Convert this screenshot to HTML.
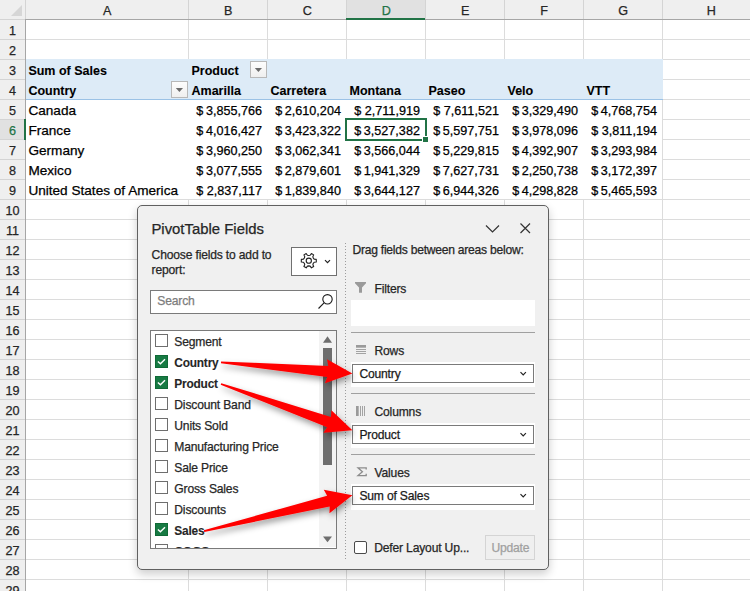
<!DOCTYPE html>
<html><head><meta charset="utf-8"><style>
html,body{margin:0;padding:0;}
body{width:750px;height:591px;overflow:hidden;position:relative;background:#fff;font-family:"Liberation Sans", sans-serif;}
.t{position:absolute;white-space:nowrap;line-height:20px;height:20px;-webkit-text-stroke:0.25px currentColor;}
</style></head><body>
<div style="position:absolute;left:0px;top:0px;width:750px;height:19px;background:#efefef"></div>
<div style="position:absolute;left:0px;top:0px;width:25px;height:591px;background:#efefef"></div>
<div style="position:absolute;left:346px;top:0px;width:79px;height:19px;background:#e1e1e1"></div>
<div style="position:absolute;left:0px;top:120px;width:25px;height:19px;background:#e1e1e1"></div>
<div style="position:absolute;left:26px;top:39px;width:724px;height:1px;background:#dcdcdc"></div>
<div style="position:absolute;left:0px;top:39px;width:25px;height:1px;background:#d4d4d4"></div>
<div style="position:absolute;left:26px;top:59px;width:724px;height:1px;background:#dcdcdc"></div>
<div style="position:absolute;left:0px;top:59px;width:25px;height:1px;background:#d4d4d4"></div>
<div style="position:absolute;left:26px;top:79px;width:724px;height:1px;background:#dcdcdc"></div>
<div style="position:absolute;left:0px;top:79px;width:25px;height:1px;background:#d4d4d4"></div>
<div style="position:absolute;left:26px;top:99px;width:724px;height:1px;background:#dcdcdc"></div>
<div style="position:absolute;left:0px;top:99px;width:25px;height:1px;background:#d4d4d4"></div>
<div style="position:absolute;left:26px;top:119px;width:724px;height:1px;background:#dcdcdc"></div>
<div style="position:absolute;left:0px;top:119px;width:25px;height:1px;background:#d4d4d4"></div>
<div style="position:absolute;left:26px;top:139px;width:724px;height:1px;background:#dcdcdc"></div>
<div style="position:absolute;left:0px;top:139px;width:25px;height:1px;background:#d4d4d4"></div>
<div style="position:absolute;left:26px;top:159px;width:724px;height:1px;background:#dcdcdc"></div>
<div style="position:absolute;left:0px;top:159px;width:25px;height:1px;background:#d4d4d4"></div>
<div style="position:absolute;left:26px;top:179px;width:724px;height:1px;background:#dcdcdc"></div>
<div style="position:absolute;left:0px;top:179px;width:25px;height:1px;background:#d4d4d4"></div>
<div style="position:absolute;left:26px;top:199px;width:724px;height:1px;background:#dcdcdc"></div>
<div style="position:absolute;left:0px;top:199px;width:25px;height:1px;background:#d4d4d4"></div>
<div style="position:absolute;left:26px;top:219px;width:724px;height:1px;background:#dcdcdc"></div>
<div style="position:absolute;left:0px;top:219px;width:25px;height:1px;background:#d4d4d4"></div>
<div style="position:absolute;left:26px;top:239px;width:724px;height:1px;background:#dcdcdc"></div>
<div style="position:absolute;left:0px;top:239px;width:25px;height:1px;background:#d4d4d4"></div>
<div style="position:absolute;left:26px;top:259px;width:724px;height:1px;background:#dcdcdc"></div>
<div style="position:absolute;left:0px;top:259px;width:25px;height:1px;background:#d4d4d4"></div>
<div style="position:absolute;left:26px;top:279px;width:724px;height:1px;background:#dcdcdc"></div>
<div style="position:absolute;left:0px;top:279px;width:25px;height:1px;background:#d4d4d4"></div>
<div style="position:absolute;left:26px;top:299px;width:724px;height:1px;background:#dcdcdc"></div>
<div style="position:absolute;left:0px;top:299px;width:25px;height:1px;background:#d4d4d4"></div>
<div style="position:absolute;left:26px;top:319px;width:724px;height:1px;background:#dcdcdc"></div>
<div style="position:absolute;left:0px;top:319px;width:25px;height:1px;background:#d4d4d4"></div>
<div style="position:absolute;left:26px;top:339px;width:724px;height:1px;background:#dcdcdc"></div>
<div style="position:absolute;left:0px;top:339px;width:25px;height:1px;background:#d4d4d4"></div>
<div style="position:absolute;left:26px;top:359px;width:724px;height:1px;background:#dcdcdc"></div>
<div style="position:absolute;left:0px;top:359px;width:25px;height:1px;background:#d4d4d4"></div>
<div style="position:absolute;left:26px;top:379px;width:724px;height:1px;background:#dcdcdc"></div>
<div style="position:absolute;left:0px;top:379px;width:25px;height:1px;background:#d4d4d4"></div>
<div style="position:absolute;left:26px;top:399px;width:724px;height:1px;background:#dcdcdc"></div>
<div style="position:absolute;left:0px;top:399px;width:25px;height:1px;background:#d4d4d4"></div>
<div style="position:absolute;left:26px;top:419px;width:724px;height:1px;background:#dcdcdc"></div>
<div style="position:absolute;left:0px;top:419px;width:25px;height:1px;background:#d4d4d4"></div>
<div style="position:absolute;left:26px;top:439px;width:724px;height:1px;background:#dcdcdc"></div>
<div style="position:absolute;left:0px;top:439px;width:25px;height:1px;background:#d4d4d4"></div>
<div style="position:absolute;left:26px;top:459px;width:724px;height:1px;background:#dcdcdc"></div>
<div style="position:absolute;left:0px;top:459px;width:25px;height:1px;background:#d4d4d4"></div>
<div style="position:absolute;left:26px;top:479px;width:724px;height:1px;background:#dcdcdc"></div>
<div style="position:absolute;left:0px;top:479px;width:25px;height:1px;background:#d4d4d4"></div>
<div style="position:absolute;left:26px;top:499px;width:724px;height:1px;background:#dcdcdc"></div>
<div style="position:absolute;left:0px;top:499px;width:25px;height:1px;background:#d4d4d4"></div>
<div style="position:absolute;left:26px;top:519px;width:724px;height:1px;background:#dcdcdc"></div>
<div style="position:absolute;left:0px;top:519px;width:25px;height:1px;background:#d4d4d4"></div>
<div style="position:absolute;left:26px;top:539px;width:724px;height:1px;background:#dcdcdc"></div>
<div style="position:absolute;left:0px;top:539px;width:25px;height:1px;background:#d4d4d4"></div>
<div style="position:absolute;left:26px;top:559px;width:724px;height:1px;background:#dcdcdc"></div>
<div style="position:absolute;left:0px;top:559px;width:25px;height:1px;background:#d4d4d4"></div>
<div style="position:absolute;left:26px;top:579px;width:724px;height:1px;background:#dcdcdc"></div>
<div style="position:absolute;left:0px;top:579px;width:25px;height:1px;background:#d4d4d4"></div>
<div style="position:absolute;left:26px;top:599px;width:724px;height:1px;background:#dcdcdc"></div>
<div style="position:absolute;left:0px;top:599px;width:25px;height:1px;background:#d4d4d4"></div>
<div style="position:absolute;left:188px;top:20px;width:1px;height:571px;background:#dcdcdc"></div>
<div style="position:absolute;left:188px;top:0px;width:1px;height:19px;background:#d4d4d4"></div>
<div style="position:absolute;left:267px;top:20px;width:1px;height:571px;background:#dcdcdc"></div>
<div style="position:absolute;left:267px;top:0px;width:1px;height:19px;background:#d4d4d4"></div>
<div style="position:absolute;left:346px;top:20px;width:1px;height:571px;background:#dcdcdc"></div>
<div style="position:absolute;left:346px;top:0px;width:1px;height:19px;background:#d4d4d4"></div>
<div style="position:absolute;left:425px;top:20px;width:1px;height:571px;background:#dcdcdc"></div>
<div style="position:absolute;left:425px;top:0px;width:1px;height:19px;background:#d4d4d4"></div>
<div style="position:absolute;left:504px;top:20px;width:1px;height:571px;background:#dcdcdc"></div>
<div style="position:absolute;left:504px;top:0px;width:1px;height:19px;background:#d4d4d4"></div>
<div style="position:absolute;left:583px;top:20px;width:1px;height:571px;background:#dcdcdc"></div>
<div style="position:absolute;left:583px;top:0px;width:1px;height:19px;background:#d4d4d4"></div>
<div style="position:absolute;left:662px;top:20px;width:1px;height:571px;background:#dcdcdc"></div>
<div style="position:absolute;left:662px;top:0px;width:1px;height:19px;background:#d4d4d4"></div>
<div style="position:absolute;left:791px;top:20px;width:1px;height:571px;background:#dcdcdc"></div>
<div style="position:absolute;left:791px;top:0px;width:1px;height:19px;background:#d4d4d4"></div>
<div style="position:absolute;left:26px;top:59px;width:636px;height:140px;background:#fff"></div>
<div style="position:absolute;left:26px;top:59px;width:637px;height:40px;background:#ddebf7"></div>
<div style="position:absolute;left:26px;top:99px;width:637px;height:1px;background:#9bc2e6"></div>
<div style="position:absolute;left:0px;top:19px;width:25px;height:1px;background:#d4d4d4"></div>
<div style="position:absolute;left:25px;top:0px;width:1px;height:19px;background:#d4d4d4"></div>
<div style="position:absolute;left:25px;top:19px;width:725px;height:1px;background:#a6a6a6"></div>
<div style="position:absolute;left:25px;top:19px;width:1px;height:572px;background:#a6a6a6"></div>
<div style="position:absolute;left:346px;top:18px;width:79px;height:2px;background:#217346"></div>
<div style="position:absolute;left:24px;top:119px;width:2px;height:21px;background:#217346"></div>
<svg style="position:absolute;left:0;top:0" width="25" height="19"><polygon points="22,5 22,16 11,16" fill="#d6d6d6"/></svg>
<div class="t" style="left:-42.80px;width:300px;text-align:center;top:1.03px;font-size:12.6px;color:#262626;">A</div>
<div class="t" style="left:78.20px;width:300px;text-align:center;top:1.03px;font-size:12.6px;color:#262626;">B</div>
<div class="t" style="left:157.20px;width:300px;text-align:center;top:1.03px;font-size:12.6px;color:#262626;">C</div>
<div class="t" style="left:236.20px;width:300px;text-align:center;top:1.03px;font-size:12.6px;color:#217346;">D</div>
<div class="t" style="left:315.20px;width:300px;text-align:center;top:1.03px;font-size:12.6px;color:#262626;">E</div>
<div class="t" style="left:394.20px;width:300px;text-align:center;top:1.03px;font-size:12.6px;color:#262626;">F</div>
<div class="t" style="left:473.20px;width:300px;text-align:center;top:1.03px;font-size:12.6px;color:#262626;">G</div>
<div class="t" style="left:561.20px;width:300px;text-align:center;top:1.03px;font-size:12.6px;color:#262626;">H</div>
<div class="t" style="left:-137.50px;width:300px;text-align:center;top:21.03px;font-size:12.6px;color:#262626;">1</div>
<div class="t" style="left:-137.50px;width:300px;text-align:center;top:41.03px;font-size:12.6px;color:#262626;">2</div>
<div class="t" style="left:-137.50px;width:300px;text-align:center;top:61.03px;font-size:12.6px;color:#262626;">3</div>
<div class="t" style="left:-137.50px;width:300px;text-align:center;top:81.03px;font-size:12.6px;color:#262626;">4</div>
<div class="t" style="left:-137.50px;width:300px;text-align:center;top:101.03px;font-size:12.6px;color:#262626;">5</div>
<div class="t" style="left:-137.50px;width:300px;text-align:center;top:121.03px;font-size:12.6px;color:#217346;">6</div>
<div class="t" style="left:-137.50px;width:300px;text-align:center;top:141.03px;font-size:12.6px;color:#262626;">7</div>
<div class="t" style="left:-137.50px;width:300px;text-align:center;top:161.03px;font-size:12.6px;color:#262626;">8</div>
<div class="t" style="left:-137.50px;width:300px;text-align:center;top:181.03px;font-size:12.6px;color:#262626;">9</div>
<div class="t" style="left:-137.50px;width:300px;text-align:center;top:201.03px;font-size:12.6px;color:#262626;">10</div>
<div class="t" style="left:-137.50px;width:300px;text-align:center;top:221.03px;font-size:12.6px;color:#262626;">11</div>
<div class="t" style="left:-137.50px;width:300px;text-align:center;top:241.03px;font-size:12.6px;color:#262626;">12</div>
<div class="t" style="left:-137.50px;width:300px;text-align:center;top:261.03px;font-size:12.6px;color:#262626;">13</div>
<div class="t" style="left:-137.50px;width:300px;text-align:center;top:281.03px;font-size:12.6px;color:#262626;">14</div>
<div class="t" style="left:-137.50px;width:300px;text-align:center;top:301.03px;font-size:12.6px;color:#262626;">15</div>
<div class="t" style="left:-137.50px;width:300px;text-align:center;top:321.03px;font-size:12.6px;color:#262626;">16</div>
<div class="t" style="left:-137.50px;width:300px;text-align:center;top:341.03px;font-size:12.6px;color:#262626;">17</div>
<div class="t" style="left:-137.50px;width:300px;text-align:center;top:361.03px;font-size:12.6px;color:#262626;">18</div>
<div class="t" style="left:-137.50px;width:300px;text-align:center;top:381.03px;font-size:12.6px;color:#262626;">19</div>
<div class="t" style="left:-137.50px;width:300px;text-align:center;top:401.03px;font-size:12.6px;color:#262626;">20</div>
<div class="t" style="left:-137.50px;width:300px;text-align:center;top:421.03px;font-size:12.6px;color:#262626;">21</div>
<div class="t" style="left:-137.50px;width:300px;text-align:center;top:441.03px;font-size:12.6px;color:#262626;">22</div>
<div class="t" style="left:-137.50px;width:300px;text-align:center;top:461.03px;font-size:12.6px;color:#262626;">23</div>
<div class="t" style="left:-137.50px;width:300px;text-align:center;top:481.03px;font-size:12.6px;color:#262626;">24</div>
<div class="t" style="left:-137.50px;width:300px;text-align:center;top:501.03px;font-size:12.6px;color:#262626;">25</div>
<div class="t" style="left:-137.50px;width:300px;text-align:center;top:521.03px;font-size:12.6px;color:#262626;">26</div>
<div class="t" style="left:-137.50px;width:300px;text-align:center;top:541.03px;font-size:12.6px;color:#262626;">27</div>
<div class="t" style="left:-137.50px;width:300px;text-align:center;top:561.03px;font-size:12.6px;color:#262626;">28</div>
<div class="t" style="left:-137.50px;width:300px;text-align:center;top:581.03px;font-size:12.6px;color:#262626;">29</div>
<div class="t" style="left:28.40px;top:61.17px;font-size:12.5px;font-weight:bold;-webkit-text-stroke:0.1px currentColor;color:#000;">Sum of Sales</div>
<div class="t" style="left:191.50px;top:61.17px;font-size:12.5px;font-weight:bold;-webkit-text-stroke:0.1px currentColor;color:#000;">Product</div>
<div class="t" style="left:28.40px;top:81.17px;font-size:12.5px;font-weight:bold;-webkit-text-stroke:0.1px currentColor;color:#000;">Country</div>
<div class="t" style="left:191.50px;top:81.17px;font-size:12.5px;font-weight:bold;-webkit-text-stroke:0.1px currentColor;color:#000;">Amarilla</div>
<div class="t" style="left:270.50px;top:81.17px;font-size:12.5px;font-weight:bold;-webkit-text-stroke:0.1px currentColor;color:#000;">Carretera</div>
<div class="t" style="left:349.50px;top:81.17px;font-size:12.5px;font-weight:bold;-webkit-text-stroke:0.1px currentColor;color:#000;">Montana</div>
<div class="t" style="left:428.50px;top:81.17px;font-size:12.5px;font-weight:bold;-webkit-text-stroke:0.1px currentColor;color:#000;">Paseo</div>
<div class="t" style="left:507.50px;top:81.17px;font-size:12.5px;font-weight:bold;-webkit-text-stroke:0.1px currentColor;color:#000;">Velo</div>
<div class="t" style="left:586.50px;top:81.17px;font-size:12.5px;font-weight:bold;-webkit-text-stroke:0.1px currentColor;color:#000;">VTT</div>
<div style="position:absolute;left:250px;top:61px;width:17px;height:17px;box-sizing:border-box;border:1px solid #b8b8b8;background:linear-gradient(#fdfdfd,#efefef)"></div>
<svg style="position:absolute;left:250px;top:61px" width="17" height="17"><polygon points="4.8,7 12,7 8.4,11" fill="#6b6b6b"/></svg>
<div style="position:absolute;left:171px;top:81px;width:17px;height:17px;box-sizing:border-box;border:1px solid #b8b8b8;background:linear-gradient(#fdfdfd,#efefef)"></div>
<svg style="position:absolute;left:171px;top:81px" width="17" height="17"><polygon points="4.8,7 12,7 8.4,11" fill="#6b6b6b"/></svg>
<div class="t" style="left:28.40px;top:100.79px;font-size:13.6px;color:#000;">Canada</div>
<div class="t" style="left:196.30px;top:101.13px;font-size:12.6px;color:#000;">$</div>
<div class="t" style="left:-38.10px;width:300px;text-align:right;top:101.13px;font-size:12.6px;color:#000;">3,855,766</div>
<div class="t" style="left:275.30px;top:101.13px;font-size:12.6px;color:#000;">$</div>
<div class="t" style="left:40.90px;width:300px;text-align:right;top:101.13px;font-size:12.6px;color:#000;">2,610,204</div>
<div class="t" style="left:354.30px;top:101.13px;font-size:12.6px;color:#000;">$</div>
<div class="t" style="left:119.90px;width:300px;text-align:right;top:101.13px;font-size:12.6px;color:#000;">2,711,919</div>
<div class="t" style="left:433.30px;top:101.13px;font-size:12.6px;color:#000;">$</div>
<div class="t" style="left:198.90px;width:300px;text-align:right;top:101.13px;font-size:12.6px;color:#000;">7,611,521</div>
<div class="t" style="left:512.30px;top:101.13px;font-size:12.6px;color:#000;">$</div>
<div class="t" style="left:277.90px;width:300px;text-align:right;top:101.13px;font-size:12.6px;color:#000;">3,329,490</div>
<div class="t" style="left:591.30px;top:101.13px;font-size:12.6px;color:#000;">$</div>
<div class="t" style="left:356.90px;width:300px;text-align:right;top:101.13px;font-size:12.6px;color:#000;">4,768,754</div>
<div class="t" style="left:28.40px;top:120.79px;font-size:13.6px;color:#000;">France</div>
<div class="t" style="left:196.30px;top:121.13px;font-size:12.6px;color:#000;">$</div>
<div class="t" style="left:-38.10px;width:300px;text-align:right;top:121.13px;font-size:12.6px;color:#000;">4,016,427</div>
<div class="t" style="left:275.30px;top:121.13px;font-size:12.6px;color:#000;">$</div>
<div class="t" style="left:40.90px;width:300px;text-align:right;top:121.13px;font-size:12.6px;color:#000;">3,423,322</div>
<div class="t" style="left:354.30px;top:121.13px;font-size:12.6px;color:#000;">$</div>
<div class="t" style="left:119.90px;width:300px;text-align:right;top:121.13px;font-size:12.6px;color:#000;">3,527,382</div>
<div class="t" style="left:433.30px;top:121.13px;font-size:12.6px;color:#000;">$</div>
<div class="t" style="left:198.90px;width:300px;text-align:right;top:121.13px;font-size:12.6px;color:#000;">5,597,751</div>
<div class="t" style="left:512.30px;top:121.13px;font-size:12.6px;color:#000;">$</div>
<div class="t" style="left:277.90px;width:300px;text-align:right;top:121.13px;font-size:12.6px;color:#000;">3,978,096</div>
<div class="t" style="left:591.30px;top:121.13px;font-size:12.6px;color:#000;">$</div>
<div class="t" style="left:356.90px;width:300px;text-align:right;top:121.13px;font-size:12.6px;color:#000;">3,811,194</div>
<div class="t" style="left:28.40px;top:140.79px;font-size:13.6px;color:#000;">Germany</div>
<div class="t" style="left:196.30px;top:141.13px;font-size:12.6px;color:#000;">$</div>
<div class="t" style="left:-38.10px;width:300px;text-align:right;top:141.13px;font-size:12.6px;color:#000;">3,960,250</div>
<div class="t" style="left:275.30px;top:141.13px;font-size:12.6px;color:#000;">$</div>
<div class="t" style="left:40.90px;width:300px;text-align:right;top:141.13px;font-size:12.6px;color:#000;">3,062,341</div>
<div class="t" style="left:354.30px;top:141.13px;font-size:12.6px;color:#000;">$</div>
<div class="t" style="left:119.90px;width:300px;text-align:right;top:141.13px;font-size:12.6px;color:#000;">3,566,044</div>
<div class="t" style="left:433.30px;top:141.13px;font-size:12.6px;color:#000;">$</div>
<div class="t" style="left:198.90px;width:300px;text-align:right;top:141.13px;font-size:12.6px;color:#000;">5,229,815</div>
<div class="t" style="left:512.30px;top:141.13px;font-size:12.6px;color:#000;">$</div>
<div class="t" style="left:277.90px;width:300px;text-align:right;top:141.13px;font-size:12.6px;color:#000;">4,392,907</div>
<div class="t" style="left:591.30px;top:141.13px;font-size:12.6px;color:#000;">$</div>
<div class="t" style="left:356.90px;width:300px;text-align:right;top:141.13px;font-size:12.6px;color:#000;">3,293,984</div>
<div class="t" style="left:28.40px;top:160.79px;font-size:13.6px;color:#000;">Mexico</div>
<div class="t" style="left:196.30px;top:161.13px;font-size:12.6px;color:#000;">$</div>
<div class="t" style="left:-38.10px;width:300px;text-align:right;top:161.13px;font-size:12.6px;color:#000;">3,077,555</div>
<div class="t" style="left:275.30px;top:161.13px;font-size:12.6px;color:#000;">$</div>
<div class="t" style="left:40.90px;width:300px;text-align:right;top:161.13px;font-size:12.6px;color:#000;">2,879,601</div>
<div class="t" style="left:354.30px;top:161.13px;font-size:12.6px;color:#000;">$</div>
<div class="t" style="left:119.90px;width:300px;text-align:right;top:161.13px;font-size:12.6px;color:#000;">1,941,329</div>
<div class="t" style="left:433.30px;top:161.13px;font-size:12.6px;color:#000;">$</div>
<div class="t" style="left:198.90px;width:300px;text-align:right;top:161.13px;font-size:12.6px;color:#000;">7,627,731</div>
<div class="t" style="left:512.30px;top:161.13px;font-size:12.6px;color:#000;">$</div>
<div class="t" style="left:277.90px;width:300px;text-align:right;top:161.13px;font-size:12.6px;color:#000;">2,250,738</div>
<div class="t" style="left:591.30px;top:161.13px;font-size:12.6px;color:#000;">$</div>
<div class="t" style="left:356.90px;width:300px;text-align:right;top:161.13px;font-size:12.6px;color:#000;">3,172,397</div>
<div class="t" style="left:28.40px;top:180.79px;font-size:13.6px;color:#000;">United States of America</div>
<div class="t" style="left:196.30px;top:181.13px;font-size:12.6px;color:#000;">$</div>
<div class="t" style="left:-38.10px;width:300px;text-align:right;top:181.13px;font-size:12.6px;color:#000;">2,837,117</div>
<div class="t" style="left:275.30px;top:181.13px;font-size:12.6px;color:#000;">$</div>
<div class="t" style="left:40.90px;width:300px;text-align:right;top:181.13px;font-size:12.6px;color:#000;">1,839,840</div>
<div class="t" style="left:354.30px;top:181.13px;font-size:12.6px;color:#000;">$</div>
<div class="t" style="left:119.90px;width:300px;text-align:right;top:181.13px;font-size:12.6px;color:#000;">3,644,127</div>
<div class="t" style="left:433.30px;top:181.13px;font-size:12.6px;color:#000;">$</div>
<div class="t" style="left:198.90px;width:300px;text-align:right;top:181.13px;font-size:12.6px;color:#000;">6,944,326</div>
<div class="t" style="left:512.30px;top:181.13px;font-size:12.6px;color:#000;">$</div>
<div class="t" style="left:277.90px;width:300px;text-align:right;top:181.13px;font-size:12.6px;color:#000;">4,298,828</div>
<div class="t" style="left:591.30px;top:181.13px;font-size:12.6px;color:#000;">$</div>
<div class="t" style="left:356.90px;width:300px;text-align:right;top:181.13px;font-size:12.6px;color:#000;">5,465,593</div>
<div style="position:absolute;left:345px;top:118px;width:82px;height:23px;box-sizing:border-box;border:2px solid #217346"></div>
<div style="position:absolute;left:423px;top:137px;width:5px;height:5px;background:#217346;outline:1px solid #fff"></div>
<div style="position:absolute;left:137px;top:205px;width:412px;height:365px;box-sizing:border-box;border:1px solid #606060;border-radius:5px;background:#f0f0f0;box-shadow:0 4px 10px rgba(0,0,0,0.2)"></div>
<div class="t" style="left:151.40px;top:219.04px;font-size:14.9px;color:#262626;">PivotTable Fields</div>
<svg style="position:absolute;left:480px;top:218px" width="60" height="20"><polyline points="6,7.5 12.5,14 19,7.5" fill="none" stroke="#333" stroke-width="1.2"/><path d="M40.5,5.5 L50,15 M50,5.5 L40.5,15" stroke="#333" stroke-width="1.2"/></svg>
<div class="t" style="left:151.60px;top:244.81px;font-size:12.1px;color:#262626;letter-spacing:-0.17px;">Choose fields to add to</div>
<div class="t" style="left:151.60px;top:260.31px;font-size:12.1px;color:#262626;letter-spacing:-0.17px;">report:</div>
<div style="position:absolute;left:291px;top:247px;width:46px;height:29px;box-sizing:border-box;border:1px solid #707070;background:#fff"></div>
<svg style="position:absolute;left:291px;top:247px" width="46" height="29"><polygon points="22.30,11.10 23.18,12.16 25.28,12.38 25.28,15.02 23.18,15.24 22.30,16.30 21.83,17.59 22.69,19.52 20.40,20.84 19.15,19.13 17.80,18.90 16.45,19.13 15.20,20.84 12.91,19.52 13.77,17.59 13.30,16.30 12.42,15.24 10.32,15.02 10.32,12.38 12.42,12.16 13.30,11.10 13.77,9.81 12.91,7.88 15.20,6.56 16.45,8.27 17.80,8.50 19.15,8.27 20.40,6.56 22.69,7.88 21.83,9.81" fill="none" stroke="#222" stroke-width="1.1" stroke-linejoin="round"/><circle cx="17.80000000000001" cy="13.699999999999989" r="2.6" fill="none" stroke="#222" stroke-width="1.1"/><polyline points="34,13.2 36.5,15.7 39,13.2" fill="none" stroke="#222" stroke-width="1.2"/></svg>
<div style="position:absolute;left:150px;top:290px;width:187px;height:24px;box-sizing:border-box;border:1px solid #7a7a7a;background:#fff"></div>
<div class="t" style="left:157.30px;top:291.31px;font-size:12.1px;color:#7c7c7c;letter-spacing:-0.17px;">Search</div>
<svg style="position:absolute;left:306px;top:286px" width="36" height="32"><circle cx="21.5" cy="13.3" r="4.7" fill="none" stroke="#1a1a1a" stroke-width="1.1"/><line x1="18" y1="16.8" x2="12.5" y2="22.5" stroke="#1a1a1a" stroke-width="1.1"/></svg>
<div style="position:absolute;left:150px;top:330px;width:187px;height:219px;box-sizing:border-box;border:1px solid #7a7a7a;background:#fff;overflow:hidden">
<div style="position:absolute;left:168px;top:0;width:18px;height:216px;background:#f3f3f3"></div>
<svg style="position:absolute;left:168px;top:0" width="18" height="216"><polygon points="4,11.8 8.5,5.2 13,11.8" fill="#6e6e6e"/><rect x="4" y="17" width="9" height="117" fill="#6e6e6e"/><polygon points="4,205.5 13,205.5 8.5,211.3" fill="#6e6e6e"/></svg>
</div>
<div style="position:absolute;left:155px;top:334px;width:13px;height:13px;box-sizing:border-box;border:1px solid #6e6e6e;background:#fff"></div>
<div class="t" style="left:174.30px;top:332.01px;font-size:12.1px;color:#262626;letter-spacing:-0.17px;">Segment</div>
<div style="position:absolute;left:155px;top:355px;width:13px;height:13px;box-sizing:border-box;border:1px solid #0f6a36;background:#177a43"></div>
<svg style="position:absolute;left:155px;top:355px" width="13" height="13"><polyline points="2.9,6.5 5.4,8.7 10,4.3" fill="none" stroke="#fff" stroke-width="1.45"/></svg>
<div class="t" style="left:174.30px;top:353.08px;font-size:11.9px;font-weight:bold;-webkit-text-stroke:0.1px currentColor;color:#262626;letter-spacing:-0.2px;">Country</div>
<div style="position:absolute;left:155px;top:376px;width:13px;height:13px;box-sizing:border-box;border:1px solid #0f6a36;background:#177a43"></div>
<svg style="position:absolute;left:155px;top:376px" width="13" height="13"><polyline points="2.9,6.5 5.4,8.7 10,4.3" fill="none" stroke="#fff" stroke-width="1.45"/></svg>
<div class="t" style="left:174.30px;top:374.08px;font-size:11.9px;font-weight:bold;-webkit-text-stroke:0.1px currentColor;color:#262626;letter-spacing:-0.2px;">Product</div>
<div style="position:absolute;left:155px;top:397px;width:13px;height:13px;box-sizing:border-box;border:1px solid #6e6e6e;background:#fff"></div>
<div class="t" style="left:174.30px;top:395.01px;font-size:12.1px;color:#262626;letter-spacing:-0.17px;">Discount Band</div>
<div style="position:absolute;left:155px;top:418px;width:13px;height:13px;box-sizing:border-box;border:1px solid #6e6e6e;background:#fff"></div>
<div class="t" style="left:174.30px;top:416.01px;font-size:12.1px;color:#262626;letter-spacing:-0.17px;">Units Sold</div>
<div style="position:absolute;left:155px;top:439px;width:13px;height:13px;box-sizing:border-box;border:1px solid #6e6e6e;background:#fff"></div>
<div class="t" style="left:174.30px;top:437.01px;font-size:12.1px;color:#262626;letter-spacing:-0.17px;">Manufacturing Price</div>
<div style="position:absolute;left:155px;top:460px;width:13px;height:13px;box-sizing:border-box;border:1px solid #6e6e6e;background:#fff"></div>
<div class="t" style="left:174.30px;top:458.01px;font-size:12.1px;color:#262626;letter-spacing:-0.17px;">Sale Price</div>
<div style="position:absolute;left:155px;top:481px;width:13px;height:13px;box-sizing:border-box;border:1px solid #6e6e6e;background:#fff"></div>
<div class="t" style="left:174.30px;top:479.01px;font-size:12.1px;color:#262626;letter-spacing:-0.17px;">Gross Sales</div>
<div style="position:absolute;left:155px;top:502px;width:13px;height:13px;box-sizing:border-box;border:1px solid #6e6e6e;background:#fff"></div>
<div class="t" style="left:174.30px;top:500.01px;font-size:12.1px;color:#262626;letter-spacing:-0.17px;">Discounts</div>
<div style="position:absolute;left:155px;top:523px;width:13px;height:13px;box-sizing:border-box;border:1px solid #0f6a36;background:#177a43"></div>
<svg style="position:absolute;left:155px;top:523px" width="13" height="13"><polyline points="2.9,6.5 5.4,8.7 10,4.3" fill="none" stroke="#fff" stroke-width="1.45"/></svg>
<div class="t" style="left:174.30px;top:521.08px;font-size:11.9px;font-weight:bold;-webkit-text-stroke:0.1px currentColor;color:#262626;letter-spacing:-0.2px;">Sales</div>
<div style="position:absolute;left:155px;top:544px;width:13px;height:4px;box-sizing:border-box;border:1px solid #6e6e6e;border-bottom:none;background:#fff"></div>
<div class="t" style="left:174.30px;top:542.01px;font-size:12.1px;color:#262626;letter-spacing:-0.17px;">COGS</div>
<div style="position:absolute;left:151px;top:549px;width:185px;height:14px;background:#f0f0f0"></div>
<div style="position:absolute;left:150px;top:548px;width:187px;height:1px;background:#7a7a7a"></div>
<div style="position:absolute;left:345px;top:243px;width:1px;height:316px;background-image:linear-gradient(#9c9c9c 1px, transparent 1px);background-size:1px 3px"></div>
<div class="t" style="left:352.40px;top:240.11px;font-size:12.1px;color:#262626;letter-spacing:-0.24px;">Drag fields between areas below:</div>
<div class="t" style="left:374.50px;top:278.81px;font-size:12.1px;color:#262626;letter-spacing:-0.17px;">Filters</div>
<div class="t" style="left:374.50px;top:340.81px;font-size:12.1px;color:#262626;letter-spacing:-0.17px;">Rows</div>
<div class="t" style="left:374.50px;top:401.81px;font-size:12.1px;color:#262626;letter-spacing:-0.17px;">Columns</div>
<div class="t" style="left:374.50px;top:462.81px;font-size:12.1px;color:#262626;letter-spacing:-0.17px;">Values</div>
<div style="position:absolute;left:351px;top:300px;width:184px;height:26px;background:#fff"></div>
<div style="position:absolute;left:351px;top:332px;width:184px;height:1px;background:#a0a0a0"></div>
<div style="position:absolute;left:351px;top:362px;width:184px;height:25px;background:#fff"></div>
<div style="position:absolute;left:352px;top:364px;width:182px;height:19px;box-sizing:border-box;border:1px solid #7a7a7a;background:#fff"></div>
<div style="position:absolute;left:351px;top:393px;width:184px;height:1px;background:#a0a0a0"></div>
<div style="position:absolute;left:351px;top:423px;width:184px;height:25px;background:#fff"></div>
<div style="position:absolute;left:352px;top:425px;width:182px;height:19px;box-sizing:border-box;border:1px solid #7a7a7a;background:#fff"></div>
<div style="position:absolute;left:351px;top:454px;width:184px;height:1px;background:#a0a0a0"></div>
<div style="position:absolute;left:351px;top:484px;width:184px;height:26px;background:#fff"></div>
<div style="position:absolute;left:352px;top:486px;width:182px;height:19px;box-sizing:border-box;border:1px solid #7a7a7a;background:#fff"></div>
<div class="t" style="left:359.40px;top:363.81px;font-size:12.1px;color:#1a1a1a;letter-spacing:-0.17px;">Country</div>
<svg style="position:absolute;left:515px;top:364px" width="16" height="19"><polyline points="5.5,8.2 8.2,10.9 10.9,8.2" fill="none" stroke="#222" stroke-width="1.2"/></svg>
<div class="t" style="left:359.40px;top:424.81px;font-size:12.1px;color:#1a1a1a;letter-spacing:-0.17px;">Product</div>
<svg style="position:absolute;left:515px;top:425px" width="16" height="19"><polyline points="5.5,8.2 8.2,10.9 10.9,8.2" fill="none" stroke="#222" stroke-width="1.2"/></svg>
<div class="t" style="left:359.40px;top:485.81px;font-size:12.1px;color:#1a1a1a;letter-spacing:-0.17px;">Sum of Sales</div>
<svg style="position:absolute;left:515px;top:486px" width="16" height="19"><polyline points="5.5,8.2 8.2,10.9 10.9,8.2" fill="none" stroke="#222" stroke-width="1.2"/></svg>
<svg style="position:absolute;left:350px;top:278px" width="20" height="200"><polygon points="5,4 16,4 16,5.3 12,9.6 12,14.8 9,14.8 9,9.6 5,5.3" fill="#9a9a9a"/><rect x="6" y="67" width="10" height="2.7" fill="#9a9a9a"/><rect x="6" y="71" width="10" height="0.9" fill="#9a9a9a"/><rect x="6" y="73" width="10" height="0.9" fill="#9a9a9a"/><rect x="6" y="75" width="10" height="0.9" fill="#9a9a9a"/><rect x="6" y="128" width="2.7" height="10" fill="#9a9a9a"/><rect x="10" y="128" width="0.9" height="10" fill="#9a9a9a"/><rect x="12" y="128" width="0.9" height="10" fill="#9a9a9a"/><rect x="14" y="128" width="0.9" height="10" fill="#9a9a9a"/><polyline points="16.2,191.6 16.2,189.8 8,189.8 12.4,193.8 8,197.6 16.2,197.6 16.2,195.8" fill="none" stroke="#8c8c8c" stroke-width="1.3" stroke-linejoin="miter"/></svg>
<div style="position:absolute;left:354px;top:541px;width:13px;height:13px;box-sizing:border-box;border:1px solid #4a4a4a;border-radius:2px;background:#fff"></div>
<div class="t" style="left:374.20px;top:538.01px;font-size:12.1px;color:#262626;letter-spacing:-0.17px;">Defer Layout Up...</div>
<div style="position:absolute;left:485px;top:535px;width:50px;height:25px;box-sizing:border-box;border:1px solid #d4d4d4;background:#efefef"></div>
<div class="t" style="left:491.40px;top:537.61px;font-size:12.1px;color:#a0a0a0;letter-spacing:-0.17px;">Update</div>
<svg style="position:absolute;left:0;top:0" width="750" height="591"><defs><filter id="sh" x="-20%" y="-50%" width="140%" height="200%"><feDropShadow dx="1.5" dy="3.5" stdDeviation="3" flood-color="#000" flood-opacity="0.4"/></filter></defs><g filter="url(#sh)" fill="#ff0000"><polygon points="221.08,361.50 328.25,365.94 327.00,359.31 352.40,373.50 324.98,383.23 327.32,376.90 220.92,363.30"/><polygon points="221.30,383.15 330.93,416.90 331.39,410.18 352.40,430.30 323.42,432.81 327.28,427.28 220.70,384.85"/><polygon points="203.79,530.33 327.10,495.76 323.82,489.87 352.40,495.30 329.46,513.19 329.69,506.45 204.21,532.07"/></g></svg>
</body></html>
